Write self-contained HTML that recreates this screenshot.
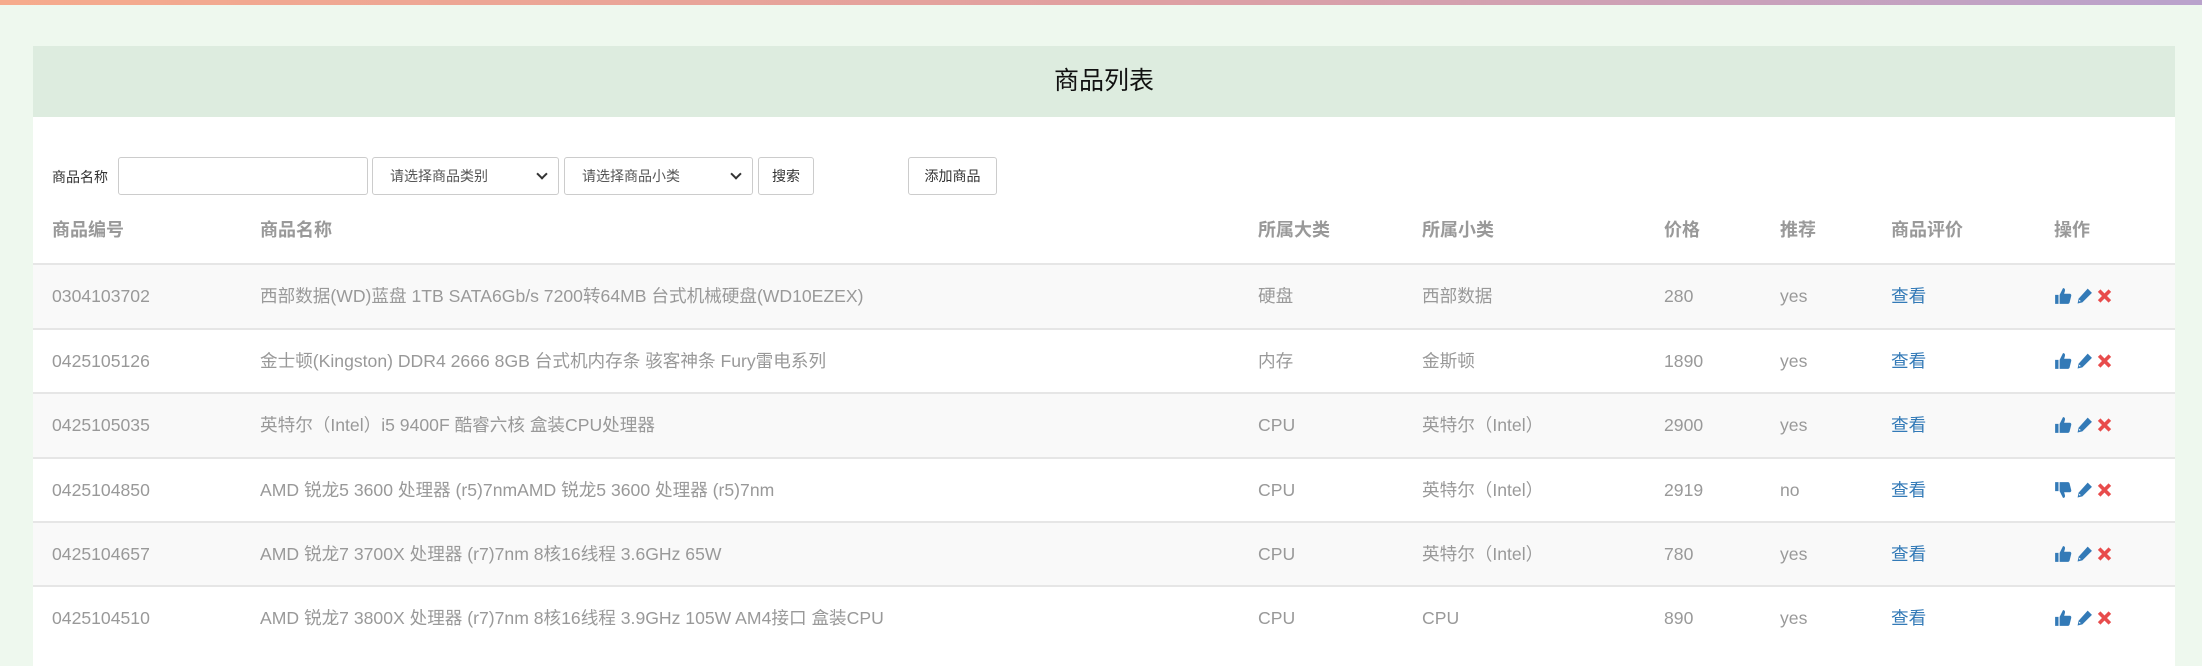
<!DOCTYPE html>
<html><head><meta charset="utf-8"><style>
*{margin:0;padding:0;box-sizing:border-box}
body{width:2202px;height:643px;overflow:hidden;background:#eef8ee;font-family:"Liberation Sans","Noto Sans CJK SC",sans-serif;position:relative}
.bar{position:absolute;left:0;top:0;width:2202px;height:5px;background:linear-gradient(90deg,#f6ab8c,#e0a0a0 50%,#b9a2cc)}
.panel{position:absolute;left:33px;top:46px;width:2142px;height:620px;background:#fff}
.head{position:absolute;left:0;top:0;width:100%;height:71px;background:#ddecdf;text-align:center;font-size:25px;line-height:71px;color:#111}
.lbl{position:absolute;left:19px;top:121px;font-size:14px;color:#333}
.ctl{position:absolute;top:111px;height:38px;border:1px solid #ccc;border-radius:3px;background:#fff;font-size:14px;color:#555;line-height:36px;padding-left:17px}
.sel::after{content:"";position:absolute;right:12px;top:12px;width:6px;height:6px;border-right:2px solid #333;border-bottom:2px solid #333;transform:rotate(45deg)}
.btn{padding:0;text-align:center;color:#333}
.row{position:absolute;left:0;width:100%;height:65px;border-top:2px solid #e6e6e6}
.row span,.th span{position:absolute;top:0;line-height:62px;font-size:17.6px;color:#999;white-space:nowrap}
.th span{font-weight:bold;line-height:1;top:175px;color:#999;font-size:18px}
.odd{background:#f9f9f9}
a{color:#337ab7!important}
.ic{position:absolute;top:22px}
</style></head><body>
<div class="bar"></div>
<div class="panel">
<div class="head">商品列表</div>
<div class="lbl">商品名称</div>
<div class="ctl" style="left:85px;width:250px"></div>
<div class="ctl sel" style="left:339px;width:187px">请选择商品类别</div>
<div class="ctl sel" style="left:531px;width:189px">请选择商品小类</div>
<div class="ctl btn" style="left:725px;width:56px">搜索</div>
<div class="ctl btn" style="left:875px;width:89px">添加商品</div>
<div class="th">
<span style="left:19px">商品编号</span><span style="left:227px">商品名称</span><span style="left:1225px">所属大类</span><span style="left:1389px">所属小类</span><span style="left:1631px">价格</span><span style="left:1747px">推荐</span><span style="left:1858px">商品评价</span><span style="left:2021px">操作</span>
</div>
<div id="rows"></div>
</div>
<script>
var d=[["0304103702","西部数据(WD)蓝盘 1TB SATA6Gb/s 7200转64MB 台式机械硬盘(WD10EZEX)","硬盘","西部数据","280","yes"],
["0425105126","金士顿(Kingston) DDR4 2666 8GB 台式机内存条 骇客神条 Fury雷电系列","内存","金斯顿","1890","yes"],
["0425105035","英特尔（Intel）i5 9400F 酷睿六核 盒装CPU处理器","CPU","英特尔（Intel）","2900","yes"],
["0425104850","AMD 锐龙5 3600 处理器 (r5)7nmAMD 锐龙5 3600 处理器 (r5)7nm","CPU","英特尔（Intel）","2919","no"],
["0425104657","AMD 锐龙7 3700X 处理器 (r7)7nm 8核16线程 3.6GHz 65W","CPU","英特尔（Intel）","780","yes"],
["0425104510","AMD 锐龙7 3800X 处理器 (r7)7nm 8核16线程 3.9GHz 105W AM4接口 盒装CPU","CPU","CPU","890","yes"]];
var tops=[217,282,346,411,475,539],h="";
var up='<path d="M1 7h3v8H1zM5 7l3-6c1.5 0 2 1 1.7 2.5L9 6h5c1 0 1.6 1 1.3 2l-1.5 6c-.3.8-1 1-1.7 1H5z" fill="#337ab7"/>';
var dn='<g transform="translate(0,16) scale(1,-1)">'+up+'</g>';
for(var i=0;i<6;i++){var r=d[i];
h+='<div class="row'+(i%2==0?' odd':'')+'" style="top:'+tops[i]+'px"><span style="left:19px">'+r[0]+'</span><span style="left:227px">'+r[1]+'</span><span style="left:1225px">'+r[2]+'</span><span style="left:1389px">'+r[3]+'</span><span style="left:1631px">'+r[4]+'</span><span style="left:1747px">'+r[5]+'</span><span style="left:1858px"><a>查看</a></span>'+
'<svg class="ic" style="left:2021px" width="18" height="18" viewBox="0 0 16 16">'+(r[5]=="no"?dn:up)+'</svg>'+
'<svg class="ic" style="left:2043px" width="17" height="18" viewBox="0 0 16 16"><path d="M11 1l4 4-9 9-4.5 1 1-4.5z" fill="#337ab7"/><path d="M3 12l1 1" stroke="#fff" stroke-width="1"/></svg>'+
'<svg class="ic" style="left:2064px" width="15" height="18" viewBox="0 0 14 16"><path d="M2 3l10 10M12 3L2 13" stroke="#e84c4c" stroke-width="3.4"/></svg></div>';}
document.getElementById("rows").innerHTML=h;
</script>
</body></html>
